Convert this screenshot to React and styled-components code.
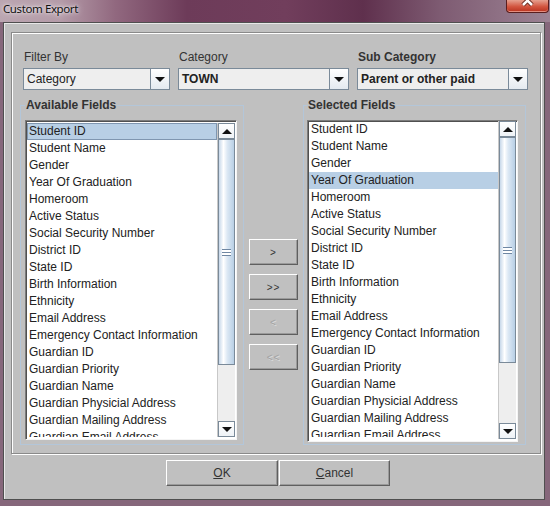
import React from "react";
import styled, { createGlobalStyle } from "styled-components";

const FIELDS = [
  "Student ID",
  "Student Name",
  "Gender",
  "Year Of Graduation",
  "Homeroom",
  "Active Status",
  "Social Security Number",
  "District ID",
  "State ID",
  "Birth Information",
  "Ethnicity",
  "Email Address",
  "Emergency Contact Information",
  "Guardian ID",
  "Guardian Priority",
  "Guardian Name",
  "Guardian Physicial Address",
  "Guardian Mailing Address",
  "Guardian Email Address",
];

const GlobalStyle = createGlobalStyle`
  html, body {
    margin: 0;
    padding: 0;
  }
  body {
    width: 550px;
    height: 506px;
    overflow: hidden;
    font-family: "Liberation Sans", Arial, sans-serif;
  }
`;

const Window = styled.div`
  width: 550px;
  height: 506px;
  display: flex;
  flex-direction: column;
  background: #86677b;
  box-sizing: border-box;
`;

const TitleBar = styled.div`
  height: 22px;
  flex: none;
  display: flex;
  align-items: flex-start;
  background: linear-gradient(
    90deg,
    #bba6b1 0%,
    #b49ba8 11%,
    #91687f 21%,
    #6d3b59 34%,
    #713e5c 52%,
    #5f304d 66%,
    #7e5b72 80%,
    #9c8394 100%
  );
`;

const Title = styled.span`
  padding: 1px 0 0 3px;
  font-family: "Noto Sans", "Open Sans", sans-serif;
  font-size: 11.5px;
  line-height: 16px;
  letter-spacing: -0.4px;
  color: #111;
  text-shadow: 0 0 6px rgba(255, 255, 255, 0.9), 0 0 3px rgba(255, 255, 255, 0.8);
`;

const CloseButton = styled.div`
  margin-left: auto;
  margin-right: 1px;
  width: 43px;
  height: 13px;
  box-sizing: border-box;
  border: 1px solid #5a1e1e;
  border-top: none;
  border-radius: 0 0 4px 4px;
  background: linear-gradient(180deg, #e6a08f 0%, #d2553f 55%, #b8321f 100%);
  box-shadow: inset 0 -1px 0 rgba(255, 200, 190, 0.6);
  svg {
    display: block;
  }
`;

const Content = styled.div`
  flex: 1;
  margin: 0 5px 6px 3px;
  display: flex;
  flex-direction: column;
  background: #c0c0c0;
  border: 1px solid #4f4f4f;
  box-shadow: inset 1px 1px 0 #e8e8e8;
  padding: 9px 3px 0 7px;
`;

const Panel = styled.div`
  height: 420px;
  flex: none;
  border: 1px solid #8a8a8a;
  box-shadow: inset 1px 1px 0 #fff, 1px 1px 0 #fff;
  display: flex;
  flex-direction: column;
`;

const TopGrid = styled.div`
  display: grid;
  grid-template-columns: 147px 171px 171px;
  column-gap: 8px;
  row-gap: 3px;
  margin: 16px 0 0 11px;
`;

const Label = styled.div`
  font-size: 12px;
  line-height: 16px;
  color: #333;
  font-weight: ${(p) => (p.$bold ? "bold" : "normal")};
  padding-left: 1px;
`;

const Combo = styled.div`
  height: 22px;
  display: flex;
  box-sizing: border-box;
  border: 1px solid #7a8a99;
  background: #eeeeee;
`;

const ComboText = styled.div`
  flex: 1;
  padding-left: 3px;
  font-size: 12px;
  line-height: 20px;
  color: #222;
  font-weight: ${(p) => (p.$bold ? "bold" : "normal")};
  white-space: nowrap;
  overflow: hidden;
`;

const ComboArrow = styled.div`
  width: 18px;
  flex: none;
  border-left: 1px solid #7a8a99;
  background: linear-gradient(180deg, #ffffff 0%, #e4eaf0 100%);
  display: flex;
  align-items: center;
  justify-content: center;
`;

const DownTriangle = styled.span`
  width: 0;
  height: 0;
  border-left: 5px solid transparent;
  border-right: 5px solid transparent;
  border-top: 5px solid #111;
`;

const UpTriangle = styled.span`
  width: 0;
  height: 0;
  border-left: 5px solid transparent;
  border-right: 5px solid transparent;
  border-bottom: 5px solid #111;
`;

const GroupRow = styled.div`
  display: grid;
  grid-template-columns: 224px 59px 223px;
  margin: 7px 0 0 8px;
`;

const Group = styled.fieldset`
  margin: 0;
  min-width: 0;
  border: 1px solid #b3c6d9;
  padding: 7px ${(p) => p.$padRight}px ${(p) => p.$padBottom}px
    ${(p) => p.$padLeft}px;
`;

const Legend = styled.legend`
  padding: 0 1px;
  font-size: 12px;
  line-height: 16px;
  font-weight: bold;
  color: #333;
`;

const ListBox = styled.div`
  height: ${(p) => p.$height}px;
  box-sizing: border-box;
  display: flex;
  background: #fff;
  border-style: solid;
  border-width: 1px;
  border-color: #7c7c7c #f4f4f4 #f4f4f4 #7c7c7c;
  box-shadow: inset 1px 1px 0 #505050;
  padding: ${(p) => p.$offset}px 0 2px 1px;
`;

const Items = styled.div`
  flex: 1;
  min-width: 0;
  overflow: hidden;
  margin-bottom: ${(p) => p.$clip}px;
`;

const Item = styled.div`
  height: 17px;
  box-sizing: border-box;
  padding-left: ${(p) => (p.$focus ? 1 : 2)}px;
  font-size: 12px;
  line-height: ${(p) => (p.$focus ? 15 : 17)}px;
  color: #222;
  white-space: nowrap;
  background: ${(p) => (p.$selected ? "#b8cfe5" : "transparent")};
  border: ${(p) => (p.$focus ? "1px solid #7f96b0" : "none")};
`;

const ScrollBar = styled.div`
  width: 17px;
  flex: none;
  display: flex;
  flex-direction: column;
  margin-right: 1px;
  background: #eeeeee;
  border-left: 1px solid #c8c8c8;
`;

const ScrollButton = styled.div`
  height: 16px;
  flex: none;
  box-sizing: border-box;
  border: 1px solid #7a8a99;
  background: linear-gradient(180deg, #ffffff 0%, #eef2f6 100%);
  display: flex;
  align-items: center;
  justify-content: center;
`;

const Thumb = styled.div`
  height: ${(p) => p.$size}px;
  flex: none;
  box-sizing: border-box;
  border: 1px solid #7a8a99;
  background: linear-gradient(
    90deg,
    #c7d8ea 0%,
    #ffffff 30%,
    #dce8f4 55%,
    #b8cfe5 100%
  );
  display: flex;
  align-items: center;
  justify-content: center;
`;

const Grip = styled.div`
  width: 9px;
  height: 7px;
  background: repeating-linear-gradient(
    180deg,
    #6f87a3 0px,
    #6f87a3 1px,
    #ffffff 1px,
    #ffffff 3px
  );
`;

const Track = styled.div`
  flex: 1;
`;

const Transfer = styled.div`
  display: flex;
  flex-direction: column;
  align-items: center;
  gap: 9px;
  padding-top: 142px;
`;

const BevelButton = styled.div`
  width: ${(p) => p.$width}px;
  height: 26px;
  box-sizing: border-box;
  border-style: solid;
  border-width: 1px;
  border-color: #ffffff #5f5f5f #5f5f5f #ffffff;
  box-shadow: inset -1px -1px 0 #9a9a9a;
  background: #c0c0c0;
  display: flex;
  align-items: center;
  justify-content: center;
  font-size: ${(p) => p.$font}px;
  color: ${(p) => (p.$disabled ? "#a2a2a2" : "#333")};
  text-shadow: ${(p) => (p.$disabled ? "1px 1px 0 #dedede" : "none")};
  letter-spacing: ${(p) => (p.$font < 12 ? "1px" : "0")};
`;

const ButtonRow = styled.div`
  display: flex;
  gap: 1px;
  margin: 6px 0 0 155px;
`;

const Mnemonic = styled.span`
  text-decoration: underline;
`;

function FieldList({ height, offset, clip, selected, focus }) {
  return (
    <ListBox $height={height} $offset={offset}>
      <Items $clip={clip}>
        {FIELDS.map((f, i) => (
          <Item key={f} $selected={i === selected} $focus={focus && i === selected}>
            {f}
          </Item>
        ))}
      </Items>
      <ScrollBar>
        <ScrollButton>
          <UpTriangle />
        </ScrollButton>
        <Thumb $size={226}>
          <Grip />
        </Thumb>
        <Track />
        <ScrollButton>
          <DownTriangle />
        </ScrollButton>
      </ScrollBar>
    </ListBox>
  );
}

export default function App() {
  return (
    <>
      <GlobalStyle />
      <Window>
        <TitleBar>
          <Title>Custom Export</Title>
          <CloseButton>
            <svg width="41" height="12" viewBox="0 0 41 12">
              <path d="M16 -4 L25 5 M25 -4 L16 5" stroke="#6a2a20" strokeWidth="4.5" />
              <path d="M16 -4 L25 5 M25 -4 L16 5" stroke="#ffffff" strokeWidth="2.5" />
            </svg>
          </CloseButton>
        </TitleBar>
        <Content>
          <Panel>
            <TopGrid>
              <Label>Filter By</Label>
              <Label>Category</Label>
              <Label $bold>Sub Category</Label>
              <Combo>
                <ComboText>Category</ComboText>
                <ComboArrow>
                  <DownTriangle />
                </ComboArrow>
              </Combo>
              <Combo>
                <ComboText $bold>TOWN</ComboText>
                <ComboArrow>
                  <DownTriangle />
                </ComboArrow>
              </Combo>
              <Combo>
                <ComboText $bold>Parent or other paid</ComboText>
                <ComboArrow>
                  <DownTriangle />
                </ComboArrow>
              </Combo>
            </TopGrid>
            <GroupRow>
              <Group $padLeft={4} $padRight={6} $padBottom={2}>
                <Legend>Available Fields</Legend>
                <FieldList height={320} offset={2} clip={0} selected={0} focus />
              </Group>
              <Transfer>
                <BevelButton $width={49} $font={10}>&gt;</BevelButton>
                <BevelButton $width={49} $font={10}>&gt;&gt;</BevelButton>
                <BevelButton $width={49} $font={10} $disabled>&lt;</BevelButton>
                <BevelButton $width={49} $font={10} $disabled>&lt;&lt;</BevelButton>
              </Transfer>
              <Group $padLeft={3} $padRight={7} $padBottom={2}>
                <Legend>Selected Fields</Legend>
                <FieldList height={322} offset={0} clip={2} selected={3} />
              </Group>
            </GroupRow>
          </Panel>
          <ButtonRow>
            <BevelButton $width={112} $font={12}>
              <span>
                <Mnemonic>O</Mnemonic>K
              </span>
            </BevelButton>
            <BevelButton $width={111} $font={12}>
              <span>
                <Mnemonic>C</Mnemonic>ancel
              </span>
            </BevelButton>
          </ButtonRow>
        </Content>
      </Window>
    </>
  );
}
